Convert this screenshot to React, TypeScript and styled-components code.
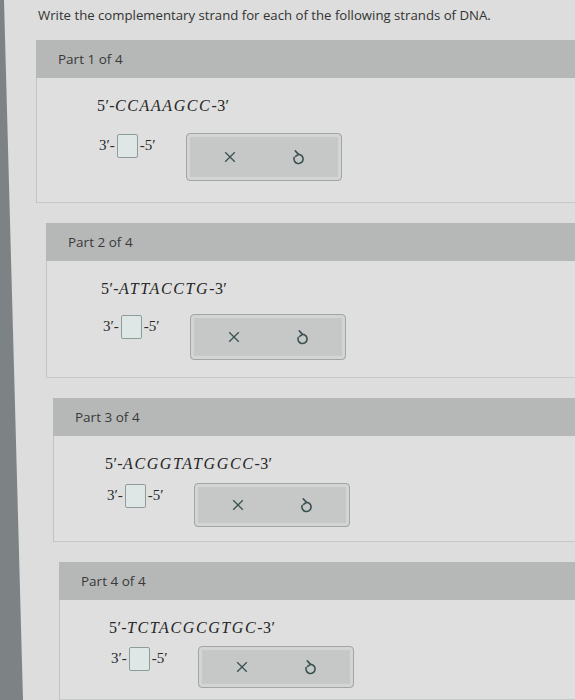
import styled, { createGlobalStyle } from 'styled-components';

const GlobalStyle = createGlobalStyle`
  body {
    margin: 0;
    background: #dcdddc;
    font-family: "Open Sans", "Liberation Sans", sans-serif;
  }
`;

const Screen = styled.div`
  position: relative;
  height: 700px;
  overflow: hidden;
  padding-top: 7px;
  box-sizing: border-box;

  &::before {
    content: '';
    position: absolute;
    left: 0;
    top: 0;
    bottom: 0;
    width: 26px;
    background: #7d8385;
    clip-path: polygon(0 0, 4px 0, 23px 100%, 0 100%);
  }
`;

const Title = styled.div`
  margin-left: 38px;
  font-size: 13.2px;
  line-height: 16px;
  color: #333;
`;

const PartList = styled.div`
  margin-top: 17px;
  display: flex;
  flex-direction: column;
  gap: 20px;
`;

const Part = styled.section<{ $indent: number }>`
  margin-left: ${(p) => p.$indent}px;
`;

const PartHeader = styled.div`
  height: 38px;
  display: flex;
  align-items: center;
  padding-left: 22px;
  background: #b6b8b8;
  font-size: 13.5px;
  color: #393939;
`;

const PartBody = styled.div<{ $height: number; $inner: number }>`
  height: ${(p) => p.$height}px;
  box-sizing: border-box;
  padding: 20px 0 0 ${(p) => p.$inner}px;
  background: #dedfde;
  border-left: 1px solid #c2c3c3;
  border-bottom: 1px solid #c6c7c7;
`;

const Strand = styled.div`
  font-family: "Liberation Serif", "DejaVu Serif", serif;
  font-size: 16px;
  line-height: 16px;
  color: #262626;
  letter-spacing: 0.4px;

  i {
    letter-spacing: 1.6px;
  }
`;

const AnswerRow = styled.div<{ $rise: number }>`
  display: flex;
  align-items: flex-start;
  margin-top: ${(p) => p.$rise}px;
`;

const Field = styled.div`
  width: 89px;
  height: 25px;
  padding-left: 2px;
  box-sizing: border-box;
  display: flex;
  align-items: center;
  gap: 2px;
`;

const End = styled.span`
  font-family: "Liberation Serif", "DejaVu Serif", serif;
  font-size: 15px;
  color: #2a2a2a;
`;

const Blank = styled.span`
  width: 21px;
  height: 24px;
  box-sizing: border-box;
  border: 1px solid #8e9b9b;
  border-radius: 2px;
  background: #dfe6e6;
`;

const ButtonGroup = styled.div<{ $height: number }>`
  width: 156px;
  height: ${(p) => p.$height}px;
  box-sizing: border-box;
  display: grid;
  grid-template-columns: 1fr 1fr;
  padding: 0 8px;
  border: 1px solid #a2a5a5;
  border-radius: 4px;
  background: #c6c8c8;
  box-shadow: inset 0 0 0 3px #d3d4d4;
`;

const IconButton = styled.button`
  border: none;
  background: transparent;
  padding: 0;
  display: flex;
  align-items: center;
  justify-content: center;
  color: #3b5151;
`;

const CloseIcon = () => (
  <svg width="12" height="12" viewBox="0 0 12 12" fill="none" stroke="currentColor" strokeWidth="1.3">
    <path d="M1.2 1.2 L10.8 10.8 M10.8 1.2 L1.2 10.8" />
  </svg>
);

const UndoIcon = () => (
  <svg width="13" height="16" viewBox="0 0 12 15" fill="none" stroke="currentColor" strokeWidth="1.5" strokeLinecap="round" strokeLinejoin="round">
    <path d="M6 5 A4.3 4.3 0 1 1 1.9 8" />
    <path d="M3 1.8 L6 5 L3.3 7" />
  </svg>
);

const parts = [
  { seq: 'CCAAAGCC', indent: 36, inner: 60, body: 125, rise: 19, btn: 48 },
  { seq: 'ATTACCTG', indent: 46, inner: 54, body: 117, rise: 17, btn: 46 },
  { seq: 'ACGGTATGGCC', indent: 53, inner: 51, body: 106, rise: 11, btn: 44 },
  { seq: 'TCTACGCGTGC', indent: 59, inner: 49, body: 100, rise: 10, btn: 42 },
];

const App = () => {
  return (
    <Screen>
      <GlobalStyle />
      <Title>Write the complementary strand for each of the following strands of DNA.</Title>
      <PartList>
        {parts.map((p, i) => (
          <Part key={p.seq} $indent={p.indent}>
            <PartHeader>
              Part {i + 1} of {parts.length}
            </PartHeader>
            <PartBody $height={p.body} $inner={p.inner}>
              <Strand>
                5′-<i>{p.seq}</i>-3′
              </Strand>
              <AnswerRow $rise={p.rise}>
                <Field>
                  <End>3′-</End>
                  <Blank />
                  <End>-5′</End>
                </Field>
                <ButtonGroup $height={p.btn}>
                  <IconButton aria-label='clear'>
                    <CloseIcon />
                  </IconButton>
                  <IconButton aria-label='undo'>
                    <UndoIcon />
                  </IconButton>
                </ButtonGroup>
              </AnswerRow>
            </PartBody>
          </Part>
        ))}
      </PartList>
    </Screen>
  );
};

export default App;
